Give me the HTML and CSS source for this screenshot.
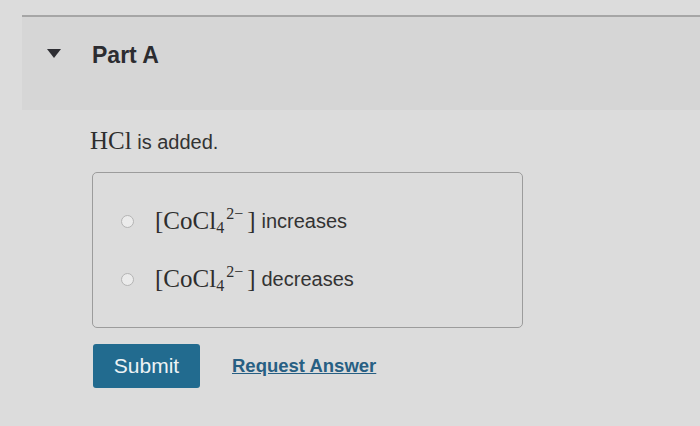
FILE: index.html
```html
<!DOCTYPE html>
<html lang="en">
<head>
  <meta charset="UTF-8">
  <meta name="viewport" content="width=device-width, initial-scale=1.0">
  <title>Part A</title>
  <link rel="stylesheet" href="styles.css">
</head>
<body>
  <div class="page">
    <div class="part">
      <div class="part-head">
        <span class="caret"></span>
        <h2 class="part-title">Part A</h2>
      </div>
      <div class="part-body">
        <p class="prompt"><span class="math">HCl</span> is added.</p>
        <div class="choices">
          <label class="choice">
            <span class="radio"></span>
            <span class="math">[CoCl<sub>4</sub><sup>2&minus;</sup>]</span>
            <span class="choice-text">increases</span>
          </label>
          <label class="choice">
            <span class="radio"></span>
            <span class="math">[CoCl<sub>4</sub><sup>2&minus;</sup>]</span>
            <span class="choice-text">decreases</span>
          </label>
        </div>
        <div class="actions">
          <button class="btn-submit">Submit</button>
          <a class="link-answer" href="#">Request Answer</a>
        </div>
      </div>
    </div>
  </div>
</body>
</html>
```

FILE: styles.css
```css
body {
  margin: 0;
  background: #dcdcdc;
  font-family: "Liberation Sans", Arial, sans-serif;
  color: #333;
}

.page {
  padding: 15px 0 0 22px;
}

.part {
  border-top: 2px solid #a6a6a6;
}

.part-head {
  display: flex;
  align-items: flex-start;
  height: 93px;
  box-sizing: border-box;
  padding: 25px 0 0 25px;
  background: #d6d6d6;
}

/* collapse arrow */
.caret {
  width: 0;
  height: 0;
  margin-top: 7px;
  border-left: 7px solid transparent;
  border-right: 7px solid transparent;
  border-top: 9px solid #2e2e33;
}

.part-title {
  margin: 0 0 0 31px;
  font-size: 23px;
  line-height: 26px;
  font-weight: bold;
  color: #2c2c30;
}

.part-body {
  padding: 17px 0 0 68px;
}

.math {
  font-family: "Liberation Serif", "Times New Roman", serif;
  font-size: 25px;
  color: #2e2e2e;
}

.math sub,
.math sup {
  font-size: 16px;
  line-height: 0;
}

.math sub {
  vertical-align: -4px;
}

.math sup {
  vertical-align: 10px;
  margin-left: 2px;
  margin-right: 4px;
}

.prompt {
  margin: 0;
  font-size: 20px;
  line-height: 28px;
}

.choices {
  margin: 16px 0 0 2px;
  width: 431px;
  height: 156px;
  box-sizing: border-box;
  border: 1px solid #9c9c9c;
  border-radius: 5px;
  padding: 31px 0 0 28px;
  display: flex;
  flex-direction: column;
  gap: 24px;
}

.choice {
  display: flex;
  align-items: center;
  height: 34px;
  font-size: 20px;
}

.radio {
  width: 13px;
  height: 13px;
  box-sizing: border-box;
  border: 1px solid #b4b4b4;
  border-radius: 50%;
  background: #ebebeb;
  margin-right: 21px;
}

.choice-text {
  margin-left: 6px;
}

.actions {
  display: flex;
  align-items: center;
  gap: 32px;
  margin: 16px 0 0 3px;
}

.btn-submit {
  width: 107px;
  height: 44px;
  border: none;
  border-radius: 3px;
  background: #226b8f;
  color: #eef3f5;
  font-family: "Liberation Sans", Arial, sans-serif;
  font-size: 21px;
}

.link-answer {
  font-size: 18.5px;
  font-weight: bold;
  color: #275f83;
  text-decoration: underline;
}
```
